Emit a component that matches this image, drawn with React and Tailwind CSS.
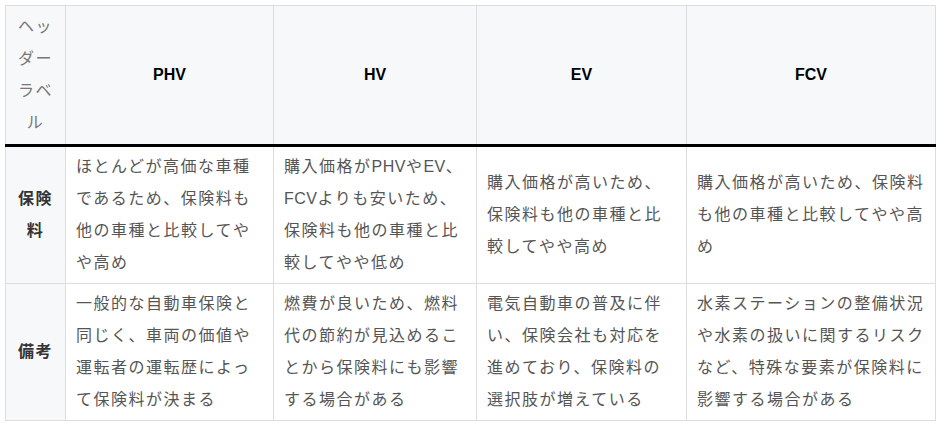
const columns = ['PHV', 'HV', 'EV', 'FCV']

const L = ({ children }) => <span className="tracking-[0.5px]">{children}</span>

const rows = [
  {
    label: '保険料',
    cells: [
      'ほとんどが高価な車種であるため、保険料も他の車種と比較してやや高め',
      <>
        購入価格が<L>PHV</L>や<L>EV</L>、<L>FCV</L>よりも安いため、保険料も他の車種と比較してやや低め
      </>,
      '購入価格が高いため、保険料も他の車種と比較してやや高め',
      '購入価格が高いため、保険料も他の車種と比較してやや高め',
    ],
  },
  {
    label: '備考',
    cells: [
      '一般的な自動車保険と同じく、車両の価値や運転者の運転歴によって保険料が決まる',
      '燃費が良いため、燃料代の節約が見込めることから保険料にも影響する場合がある',
      '電気自動車の普及に伴い、保険会社も対応を進めており、保険料の選択肢が増えている',
      '水素ステーションの整備状況や水素の扱いに関するリスクなど、特殊な要素が保険料に影響する場合がある',
    ],
  },
]

export default function App() {
  return (
    <div
      className="w-[940px] h-[425px] bg-white p-[5px]"
      style={{ fontFamily: '"Liberation Sans", "Noto Sans CJK JP", sans-serif' }}
    >
      <table className="w-[930px] table-fixed border-collapse text-[16px] leading-[32px]">
        <colgroup>
          <col className="w-[60px]" />
          <col className="w-[208px]" />
          <col className="w-[203px]" />
          <col className="w-[210px]" />
          <col className="w-[249px]" />
        </colgroup>
        <thead>
          <tr className="h-[139px]">
            <th className="border border-[#dddddd] border-b-[3px] border-b-black bg-[#f7f8fa] px-[10px] py-[5px] font-normal text-[#777777] tracking-[1.5px] text-center">
              ヘッダーラベル
            </th>
            {columns.map(c => (
              <th
                key={c}
                className="border border-[#dddddd] border-b-[3px] border-b-black bg-[#f7f8fa] px-[10px] font-bold text-black text-center"
              >
                {c}
              </th>
            ))}
          </tr>
        </thead>
        <tbody>
          {rows.map(r => (
            <tr key={r.label} className="h-[137px]">
              <th className="border border-[#dddddd] bg-[#f7f8fa] px-[10px] font-bold text-[#333333] tracking-[1.5px] text-center">
                {r.label}
              </th>
              {r.cells.map((t, i) => (
                <td
                  key={i}
                  className="border border-[#dddddd] px-[10px] py-[4px] text-[#555555] tracking-[1.5px] align-middle"
                >
                  {t}
                </td>
              ))}
            </tr>
          ))}
        </tbody>
      </table>
    </div>
  )
}
